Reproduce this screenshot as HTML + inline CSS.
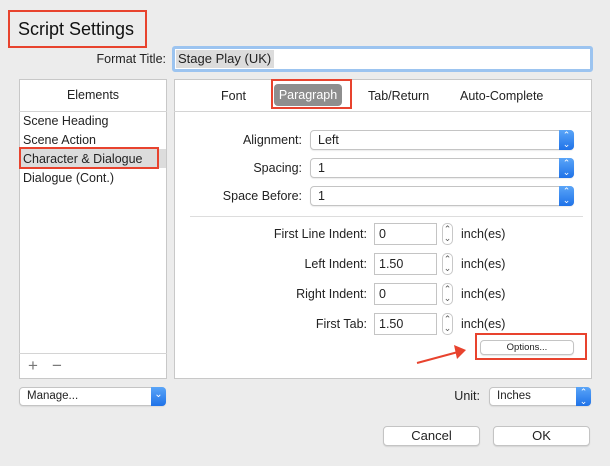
<!DOCTYPE html>
<html><head><meta charset="utf-8"><style>
*{box-sizing:border-box;margin:0;padding:0}
body{width:610px;height:466px;background:#ececec;font-family:"Liberation Sans",sans-serif;font-size:12.5px;color:#222;position:relative;overflow:hidden}
.a{position:absolute}
.red{position:absolute;border:2px solid #e8432e}
.panel{position:absolute;background:#fff;border:1px solid #c8c8c8}
.pop{position:absolute;background:#fff;border:1px solid #c4c4c4;border-radius:4px;box-shadow:0 1px 1px rgba(0,0,0,.08);padding-left:7px;line-height:18px}
.pop .b{position:absolute;right:-1px;top:-1px;bottom:-1px;width:15px;background:linear-gradient(#5aa5f8,#1f72e8);border-radius:0 4px 4px 0;color:#fff;font-size:9px;text-align:center;line-height:9px;padding-top:1px}
.lbl{position:absolute;text-align:right}
.fld{position:absolute;width:63px;height:22px;background:#fff;border:1px solid #c4c4c4;padding-left:4px;line-height:21px}
.stp{position:absolute;width:11px;height:22px;border:1px solid #c8c8c8;border-radius:5px;background:#fff;font-size:9px;line-height:9px;text-align:center;color:#555;padding-top:1px}
.btn{position:absolute;background:#fff;border:1px solid #c4c4c4;border-radius:4px;text-align:center;box-shadow:0 1px 1px rgba(0,0,0,.1)}
</style></head><body>
<div class="red" style="left:8px;top:10px;width:139px;height:38px"></div>
<div class="a" style="left:18px;top:19px;font-size:18px;color:#111">Script Settings</div>
<div class="lbl" style="left:60px;width:106px;top:52px">Format Title:</div>
<div class="a" style="left:172px;top:46px;width:421px;height:26px;border:3px solid #9cc4f0;border-radius:3px;background:#fff"></div>
<div class="a" style="left:176px;top:50px;width:98px;height:18px;background:#dcdcdc;padding-left:2px;line-height:18px;font-size:13px">Stage Play (UK)</div>

<div class="panel" style="left:19px;top:79px;width:148px;height:300px"></div>
<div class="a" style="left:19px;top:111px;width:148px;border-top:1px solid #d4d4d4"></div>
<div class="a" style="left:19px;top:88px;width:148px;text-align:center">Elements</div>
<div class="a" style="left:20px;top:149px;width:146px;height:19px;background:#dcdcdc"></div>
<div class="a" style="left:23px;top:112px;line-height:19px">Scene Heading<br>Scene Action<br>Character &amp; Dialogue<br>Dialogue (Cont.)</div>
<div class="red" style="left:19px;top:147px;width:140px;height:22px"></div>
<div class="a" style="left:19px;top:353px;width:148px;border-top:1px solid #d4d4d4"></div>
<div class="a" style="left:28px;top:356px;font-size:17px;color:#777">+</div>
<div class="a" style="left:52px;top:356px;font-size:17px;color:#777">−</div>

<div class="panel" style="left:174px;top:79px;width:418px;height:300px"></div>
<div class="a" style="left:174px;top:111px;width:418px;border-top:1px solid #d4d4d4"></div>
<div class="a" style="left:221px;top:89px">Font</div>
<div class="a" style="left:274px;top:84px;width:68px;height:22px;background:#8e8e8e;border-radius:4px;color:#fff;text-align:center;line-height:22px">Paragraph</div>
<div class="red" style="left:271px;top:79px;width:81px;height:30px"></div>
<div class="a" style="left:368px;top:89px">Tab/Return</div>
<div class="a" style="left:460px;top:89px">Auto-Complete</div>

<div class="lbl" style="left:180px;width:122px;top:133px">Alignment:</div>
<div class="pop" style="left:310px;top:130px;width:264px;height:20px">Left<div class="b">⌃<br>⌄</div></div>
<div class="lbl" style="left:180px;width:122px;top:161px">Spacing:</div>
<div class="pop" style="left:310px;top:158px;width:264px;height:20px">1<div class="b">⌃<br>⌄</div></div>
<div class="lbl" style="left:180px;width:122px;top:189px">Space Before:</div>
<div class="pop" style="left:310px;top:186px;width:264px;height:20px">1<div class="b">⌃<br>⌄</div></div>
<div class="a" style="left:190px;top:216px;width:393px;border-top:1px solid #ddd"></div>

<div class="lbl" style="left:200px;width:167px;top:227px">First Line Indent:</div>
<div class="fld" style="left:374px;top:223px">0</div><div class="stp" style="left:442px;top:223px">⌃<br>⌄</div><div class="a" style="left:461px;top:227px">inch(es)</div>
<div class="lbl" style="left:200px;width:167px;top:257px">Left Indent:</div>
<div class="fld" style="left:374px;top:253px">1.50</div><div class="stp" style="left:442px;top:253px">⌃<br>⌄</div><div class="a" style="left:461px;top:257px">inch(es)</div>
<div class="lbl" style="left:200px;width:167px;top:287px">Right Indent:</div>
<div class="fld" style="left:374px;top:283px">0</div><div class="stp" style="left:442px;top:283px">⌃<br>⌄</div><div class="a" style="left:461px;top:287px">inch(es)</div>
<div class="lbl" style="left:200px;width:167px;top:317px">First Tab:</div>
<div class="fld" style="left:374px;top:313px">1.50</div><div class="stp" style="left:442px;top:313px">⌃<br>⌄</div><div class="a" style="left:461px;top:317px">inch(es)</div>

<div class="btn" style="left:480px;top:340px;width:94px;height:15px;font-size:9.5px;line-height:13px">Options...</div>
<div class="red" style="left:475px;top:333px;width:112px;height:27px"></div>
<svg class="a" style="left:410px;top:340px" width="60" height="30"><line x1="7" y1="23" x2="48" y2="12" stroke="#e8432e" stroke-width="2"/><polygon points="56,10 44,5 47,19" fill="#e8432e"/></svg>

<div class="pop" style="left:19px;top:387px;width:147px;height:19px;font-size:11.5px;line-height:17px">Manage...<div class="b" style="font-size:10px;padding-top:3px">⌄</div></div>
<div class="lbl" style="left:420px;width:60px;top:389px">Unit:</div>
<div class="pop" style="left:489px;top:387px;width:102px;height:19px;font-size:11.5px;line-height:17px">Inches<div class="b">⌃<br>⌄</div></div>

<div class="btn" style="left:383px;top:426px;width:97px;height:20px;line-height:18px;font-size:13px">Cancel</div>
<div class="btn" style="left:493px;top:426px;width:97px;height:20px;line-height:18px;font-size:13px">OK</div>
</body></html>
